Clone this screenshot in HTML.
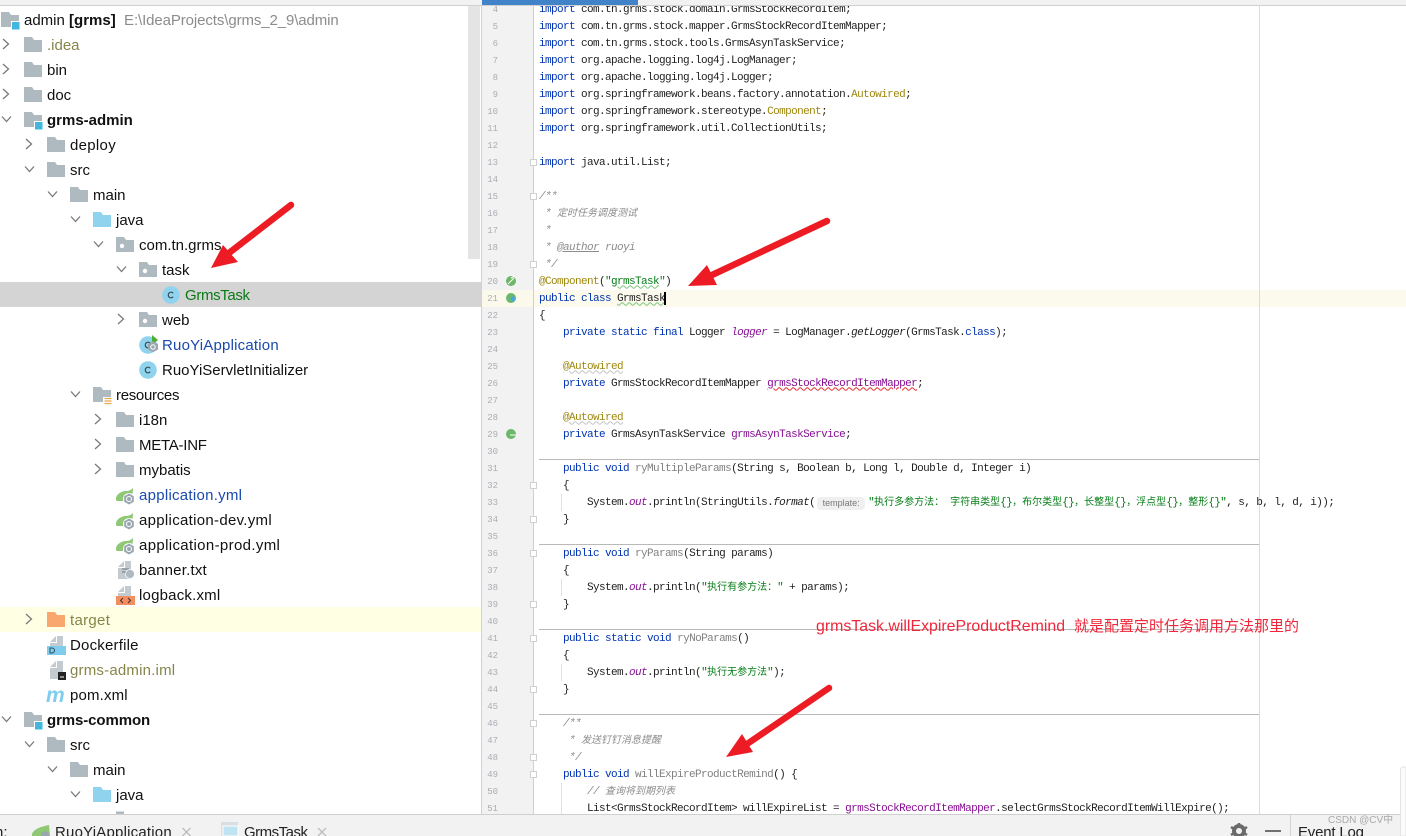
<!DOCTYPE html>
<html><head><meta charset="utf-8"><title>grms</title>
<style>
html,body{margin:0;padding:0;width:1406px;height:836px;overflow:hidden;background:#fff}
#t{position:absolute;left:0;top:8px;width:468px;height:806px;overflow:hidden;font:15px/25px "Liberation Sans","Noto Sans CJK SC",sans-serif;color:#111}
#t div{position:absolute;white-space:nowrap;height:25px}
.o{color:#85854a}.bl{color:#1a49ad}.g{color:#8c8c8c;letter-spacing:-.1px}.b{font-weight:700}
#gut{position:absolute;left:482px;top:6px;width:51px;height:808px;background:#f2f2f2;overflow:hidden}
#nums{position:absolute;left:0;top:-4.5px;width:16px;margin:0;text-align:right;font:9px/17px "Liberation Mono",monospace;color:#a8adb4}
#ed{position:absolute;left:534px;top:6px;width:872px;height:808px;overflow:hidden}
#code{position:absolute;left:5px;top:-4.5px;margin:0;font:11px/17px "Liberation Mono","Noto Sans CJK SC",monospace;letter-spacing:-.6px;color:#1f1f1f}
.z{font-size:10px;letter-spacing:0;line-height:10px}
.k{color:#0033b3}.a{color:#9e880d}.c{color:#8c8c8c;font-style:italic}.s{color:#067d17}.f{color:#871094}.fi{color:#871094;font-style:italic}.u{color:#808080}.i{font-style:italic}
.wg{text-decoration:underline wavy #7cc47c 1px}.wa{text-decoration:underline wavy #c4c4c4 1px}.wr{text-decoration:underline wavy #e53030 1px}
.in{display:inline-block;width:48px;height:13px;margin:2px 3px 0 2px;background:#f0f0f0;border-radius:4px;font:9px/13px "Liberation Sans",sans-serif;letter-spacing:0;color:#777;text-align:center;vertical-align:top}
.sep{position:absolute;left:539px;width:720px;height:1px;background:#b9b9b9}
.bt{position:absolute;font:15px/20px "Liberation Sans",sans-serif;color:#222;white-space:nowrap}
</style></head><body>
<div style="position:absolute;left:0;top:0;width:1406px;height:5px;background:#f2f2f2"></div>
<div style="position:absolute;left:0;top:5px;width:1406px;height:1px;background:#d1d1d1"></div>
<div style="position:absolute;left:482px;top:0;width:156px;height:5px;background:#4083c9"></div>
<div style="position:absolute;left:0;top:282px;width:481px;height:25px;background:#d4d4d4"></div>
<div style="position:absolute;left:0;top:607px;width:481px;height:25px;background:#ffffe4"></div>
<div style="position:absolute;left:468px;top:6px;width:12px;height:253px;background:#e4e4e4"></div>
<div style="position:absolute;left:481px;top:6px;width:1px;height:808px;background:#d1d1d1"></div>
<div id="gut">
<div style="position:absolute;left:0;top:284px;width:51px;height:17px;background:#fbf9ec"></div>
<pre id="nums">4
5
6
7
8
9
10
11
12
13
14
15
16
17
18
19
20
21
22
23
24
25
26
27
28
29
30
31
32
33
34
35
36
37
38
39
40
41
42
43
44
45
46
47
48
49
50
51</pre>
</div>
<div style="position:absolute;left:533px;top:6px;width:1px;height:808px;background:#cfcfcf"></div>
<div style="position:absolute;left:534px;top:290px;width:872px;height:17px;background:#fcfaed"></div>
<div style="position:absolute;left:1259px;top:6px;width:1px;height:808px;background:#dcdcdc"></div>
<div class="sep" style="top:459px"></div>
<div class="sep" style="top:544px"></div>
<div class="sep" style="top:629px"></div>
<div class="sep" style="top:714px"></div>
<div style="position:absolute;left:561px;top:494px;width:1px;height:17px;background:#e0e0e0"></div>
<div style="position:absolute;left:561px;top:579px;width:1px;height:17px;background:#e0e0e0"></div>
<div style="position:absolute;left:561px;top:664px;width:1px;height:17px;background:#e0e0e0"></div>
<div style="position:absolute;left:561px;top:783px;width:1px;height:31px;background:#e0e0e0"></div>
<div id="ed"><pre id="code"><span class="k">import</span> com.tn.grms.stock.domain.GrmsStockRecordItem;
<span class="k">import</span> com.tn.grms.stock.mapper.GrmsStockRecordItemMapper;
<span class="k">import</span> com.tn.grms.stock.tools.GrmsAsynTaskService;
<span class="k">import</span> org.apache.logging.log4j.LogManager;
<span class="k">import</span> org.apache.logging.log4j.Logger;
<span class="k">import</span> org.springframework.beans.factory.annotation.<span class="a">Autowired</span>;
<span class="k">import</span> org.springframework.stereotype.<span class="a">Component</span>;
<span class="k">import</span> org.springframework.util.CollectionUtils;

<span class="k">import</span> java.util.List;

<span class="c">/**</span>
<span class="c"> * <span class="z">定时任务调度测试</span></span>
<span class="c"> *</span>
<span class="c"> * <u>@author</u> ruoyi</span>
<span class="c"> */</span>
<span class="a">@Component</span>(<span class="s">"<span class="wg">grmsTask</span>"</span>)
<span class="k">public class</span> <span class="wg">GrmsTask</span>
{
    <span class="k">private static final</span> Logger <span class="fi">logger</span> = LogManager.<span class="i">getLogger</span>(GrmsTask.<span class="k">class</span>);

    <span class="a wa">@Autowired</span>
    <span class="k">private</span> GrmsStockRecordItemMapper <span class="f wr">grmsStockRecordItemMapper</span>;

    <span class="a wa">@Autowired</span>
    <span class="k">private</span> GrmsAsynTaskService <span class="f">grmsAsynTaskService</span>;

    <span class="k">public void</span> <span class="u">ryMultipleParams</span>(String s, Boolean b, Long l, Double d, Integer i)
    {
        System.<span class="fi">out</span>.println(StringUtils.<span class="i">format</span>(<span class="in">template:</span><span class="s">"<span class="z">执行多参方法：</span> <span class="z">字符串类型</span>{}<span class="z">，布尔类型</span>{}<span class="z">，长整型</span>{}<span class="z">，浮点型</span>{}<span class="z">，整形</span>{}"</span>, s, b, l, d, i));
    }

    <span class="k">public void</span> <span class="u">ryParams</span>(String params)
    {
        System.<span class="fi">out</span>.println(<span class="s">"<span class="z">执行有参方法：</span>"</span> + params);
    }

    <span class="k">public static void</span> <span class="u">ryNoParams</span>()
    {
        System.<span class="fi">out</span>.println(<span class="s">"<span class="z">执行无参方法</span>"</span>);
    }

    <span class="c">/**</span>
<span class="c">     * <span class="z">发送钉钉消息提醒</span></span>
<span class="c">     */</span>
    <span class="k">public void</span> <span class="u">willExpireProductRemind</span>() {
        <span class="c">// <span class="z">查询将到期列表</span></span>
        List&lt;GrmsStockRecordItem&gt; willExpireList = <span class="f">grmsStockRecordItemMapper</span>.selectGrmsStockRecordItemWillExpire();</pre></div>
<div style="position:absolute;left:664px;top:292px;width:2px;height:13px;background:#000"></div>
<div id="t">
<div style="left:24px;top:0">admin <span class="b">[grms]</span> &nbsp;<span class="g">E:\IdeaProjects\grms_2_9\admin</span></div>
<div class="o" style="left:47px;top:25px">.idea</div>
<div style="left:47px;top:50px">bin</div>
<div style="left:47px;top:75px">doc</div>
<div class="b" style="left:47px;top:100px">grms-admin</div>
<div style="left:70px;top:125px;letter-spacing:.3px">deploy</div>
<div style="left:70px;top:150px">src</div>
<div style="left:93px;top:175px">main</div>
<div style="left:116px;top:200px">java</div>
<div style="left:139px;top:225px">com.tn.grms</div>
<div style="left:162px;top:250px">task</div>
<div style="left:185px;top:275px;color:#0a7a14;letter-spacing:-.35px">GrmsTask</div>
<div style="left:162px;top:300px">web</div>
<div class="bl" style="left:162px;top:325px;letter-spacing:.2px">RuoYiApplication</div>
<div style="left:162px;top:350px">RuoYiServletInitializer</div>
<div style="left:116px;top:375px;letter-spacing:-.3px">resources</div>
<div style="left:139px;top:400px">i18n</div>
<div style="left:139px;top:425px;letter-spacing:-.25px">META-INF</div>
<div style="left:139px;top:450px">mybatis</div>
<div class="bl" style="left:139px;top:475px;letter-spacing:.27px">application.yml</div>
<div style="left:139px;top:500px;letter-spacing:.3px">application-dev.yml</div>
<div style="left:139px;top:525px;letter-spacing:.35px">application-prod.yml</div>
<div style="left:139px;top:550px;letter-spacing:.2px">banner.txt</div>
<div style="left:139px;top:575px;letter-spacing:.2px">logback.xml</div>
<div class="o" style="left:70px;top:600px;letter-spacing:.3px">target</div>
<div style="left:70px;top:625px;letter-spacing:.2px">Dockerfile</div>
<div class="o" style="left:70px;top:650px;letter-spacing:.2px">grms-admin.iml</div>
<div style="left:70px;top:675px;letter-spacing:.15px">pom.xml</div>
<div class="b" style="left:47px;top:700px;letter-spacing:-.1px">grms-common</div>
<div style="left:70px;top:725px">src</div>
<div style="left:93px;top:750px">main</div>
<div style="left:116px;top:775px">java</div>
</div>
<div style="position:absolute;left:0;top:814px;width:1406px;height:22px;background:#f2f2f2;overflow:hidden">
<div style="position:absolute;left:0;top:0;width:1406px;height:1px;background:#cfcfcf"></div>
<div class="bt" style="left:-5px;top:9px">n:</div>
<div class="bt" style="left:55px;top:9px;letter-spacing:.2px">RuoYiApplication</div>
<div class="bt" style="left:244px;top:9px;letter-spacing:-.5px">GrmsTask</div>
<div class="bt" style="left:1298px;top:9px;letter-spacing:-.2px">Event Log</div>
<div style="position:absolute;left:1290px;top:1px;width:1px;height:21px;background:#d4d4d4"></div>
<div style="position:absolute;left:1328px;top:0;font:10px/14px 'Liberation Sans','Noto Sans CJK SC',sans-serif;color:#a8a8a8;white-space:nowrap">CSDN @CV中</div>
</div>
<svg width="1406" height="836" viewBox="0 0 1406 836" style="position:absolute;left:0;top:0;pointer-events:none">
<defs>
<g id="f"><path d="M0 0h8l2 3h8v12H0z" fill="#aeb9c0"/></g>
<g id="j"><path d="M0 0h8l2 3h8v12H0z" fill="#8fd3ee"/></g>
<g id="p"><path d="M0 0h8l2 3h8v12H0z" fill="#aeb9c0"/><circle cx="6" cy="9" r="2.2" fill="#fff"/></g>
<g id="m"><path d="M0 0h8l2 3h8v12H0z" fill="#aeb9c0"/><rect x="10.500" y="9.500" width="8.500" height="8.500" fill="#40b6e0" stroke="#fff"/></g>
<g id="R"><path d="M0 -5L5.5 0L0 5" fill="none" stroke="#7a7a7a" stroke-width="1.3"/></g>
<g id="D"><path d="M-1 -2.5L3.500 2.500L8 -2.5" fill="none" stroke="#7a7a7a" stroke-width="1.3"/></g>
<g id="C"><circle cx="9" cy="8" r="8.8" fill="#8fd3ee"/><path d="M11.200 6.200a2.800 2.800 0 1 0 0 3.600" fill="none" stroke="#3a4a52" stroke-width="1.200"/></g>
<g id="Y"><path d="M0 11C0 6 6 3 10 3C13 3 15 2 17 0C17 7 15 13 9 13H2C0 13 0 12 0 11z" fill="#8fc874"/><circle cx="13" cy="11" r="6" fill="#fff"/><path d="M13 5.500l4.800 2.800v5.400L13 16.500l-4.800-2.800V8.300z" fill="#9aa7b0"/><circle cx="13" cy="11" r="2.500" fill="none" stroke="#fff"/></g>
<g id="F"><path d="M0 6L6 0V6zM7 0h6v10H0V7h7z" fill="#c3cbd1"/></g>
<g id="G"><path d="M0 6L6 0V6zM7 0h6v18H0V7h7z" fill="#c3cbd1"/></g>
</defs>
<!-- tree icons -->
<use href="#m" x="1" y="12"/>
<use href="#f" x="24" y="37"/><use href="#f" x="24" y="62"/><use href="#f" x="24" y="87"/>
<use href="#m" x="24" y="112"/>
<use href="#f" x="47" y="137"/><use href="#f" x="47" y="162"/><use href="#f" x="70" y="187"/>
<use href="#j" x="93" y="212"/><use href="#p" x="116" y="237"/><use href="#p" x="139" y="262"/>
<use href="#C" x="162" y="287"/><use href="#p" x="139" y="312"/>
<use href="#C" x="139" y="337"/><path d="M152 335l6 5-6 5z" fill="#4caf32"/><path d="M148 344l5-2.800 5 2.800v5.500l-5 2.800-5-2.800z" fill="#9aa7b0"/><circle cx="153" cy="347" r="2.200" fill="none" stroke="#fff"/>
<use href="#C" x="139" y="362"/>
<use href="#f" x="93" y="387"/><rect x="103" y="397" width="9" height="9" fill="#fff"/><path d="M104.500 398.500h7M104.500 401h7M104.500 403.500h7" stroke="#e8a84c" stroke-width="1.300"/>
<use href="#f" x="116" y="412"/><use href="#f" x="116" y="437"/><use href="#f" x="116" y="462"/>
<use href="#Y" x="116" y="488"/><use href="#Y" x="116" y="513"/><use href="#Y" x="116" y="538"/>
<use href="#G" x="118" y="561"/><path d="M122 569h7M122 572h5" stroke="#6b7680"/><circle cx="130" cy="574" r="4.500" fill="#aeb9c0" stroke="#fff" stroke-width=".7"/>
<use href="#F" x="118" y="586"/><rect x="116" y="596" width="19" height="9" fill="#f58e5f"/><path d="M123 598l-2.500 2.500 2.500 2.500M128 598l2.500 2.500-2.500 2.500" fill="none" stroke="#333"/>
<path d="M47 612h8l2 3h8v12H47z" fill="#f9a66f"/>
<use href="#F" x="50" y="636"/><rect x="47" y="646" width="19" height="9" fill="#7fcdec"/><path d="M50 648v5h2a2.500 2.500 0 0 0 0-5z" fill="none" stroke="#2f4a5c"/>
<use href="#G" x="50" y="661"/><rect x="58" y="672" width="8" height="8" fill="#222"/><path d="M60 677h4" stroke="#fff"/>
<text x="46" y="702" font-family="'Liberation Sans',sans-serif" font-size="21" font-weight="700" font-style="italic" fill="#7fcdec">m</text>
<use href="#m" x="24" y="712"/>
<use href="#f" x="47" y="737"/><use href="#f" x="70" y="762"/><use href="#j" x="93" y="787"/>
<rect x="116" y="811.500" width="8" height="2.500" fill="#aeb9c0"/>
<!-- chevrons -->
<use href="#R" x="3" y="44"/><use href="#R" x="3" y="69"/><use href="#R" x="3" y="94"/>
<use href="#D" x="3" y="119"/><use href="#R" x="26" y="144"/><use href="#D" x="26" y="169"/>
<use href="#D" x="49" y="194"/><use href="#D" x="72" y="219"/><use href="#D" x="95" y="244"/><use href="#D" x="118" y="269"/>
<use href="#R" x="118" y="319"/><use href="#D" x="72" y="394"/>
<use href="#R" x="95" y="419"/><use href="#R" x="95" y="444"/><use href="#R" x="95" y="469"/>
<use href="#R" x="26" y="619"/>
<use href="#D" x="3" y="719"/><use href="#D" x="26" y="744"/><use href="#D" x="49" y="769"/><use href="#D" x="72" y="794"/>
<!-- gutter icons -->
<circle cx="511" cy="281" r="5" fill="#6cb86a"/><path d="M508 284l6-6M511 278l4-2" stroke="#fff"/>
<circle cx="511" cy="298" r="5" fill="#6cb86a"/><circle cx="513" cy="299" r="2.500" fill="#4aa8dc"/>
<circle cx="511" cy="434" r="5" fill="#6cb86a"/><path d="M510 435h6" stroke="#fff"/>
<!-- fold marks -->
<g fill="#fff" stroke="#d0d0d0">
<rect x="530.500" y="159.500" width="6" height="6"/><rect x="530.500" y="193.500" width="6" height="6"/><rect x="530.500" y="261.500" width="6" height="6"/>
<rect x="530.500" y="482.500" width="6" height="6"/><rect x="530.500" y="516.500" width="6" height="6"/>
<rect x="530.500" y="550.500" width="6" height="6"/><rect x="530.500" y="601.500" width="6" height="6"/>
<rect x="530.500" y="635.500" width="6" height="6"/><rect x="530.500" y="686.500" width="6" height="6"/>
<rect x="530.500" y="720.500" width="6" height="6"/><rect x="530.500" y="754.500" width="6" height="6"/><rect x="530.500" y="771.500" width="6" height="6"/>
</g>
<!-- bottom icons -->
<path d="M32 836c-1-5 6-9 17-11l1 11z" fill="#8fc874"/><path d="M41 836v-3l4-2 4 2v3z" fill="#9aa7b0"/>
<rect x="221" y="822" width="17" height="14" fill="#d9dee2"/><rect x="223" y="826" width="15" height="10" fill="#bfe3f0" stroke="#fff"/>
<path d="M182.500 828l8 8M190.500 828l-8 8M318 828l8 8M326 828l-8 8" stroke="#b5b5b5" stroke-width="1.200"/>
<circle cx="1239" cy="831" r="5" fill="none" stroke="#6b6b6b" stroke-width="4"/>
<path d="M1239 823v3M1239 836v3M1231 827l3 2M1244 833l3 2M1231 835l3-2M1244 829l3-2" stroke="#6b6b6b" stroke-width="2.500"/>
<rect x="1265" y="830" width="16" height="2" fill="#707070"/>
<path d="M1406 767h-3a3 3 0 0 0-2.500 3v66H1406z" fill="#fbfbfb" stroke="#e4e4e4"/>
<!-- red arrows -->
<g fill="#ed1c24">
<path d="M291 205L229 253" stroke="#ed1c24" stroke-width="6.500" stroke-linecap="round"/><path d="M211 268L223 245L238 262z"/>
<path d="M827 221L712 275" stroke="#ed1c24" stroke-width="6.500" stroke-linecap="round"/><path d="M688 286L707 265L717 285z"/>
<path d="M829 688L747 744" stroke="#ed1c24" stroke-width="6.500" stroke-linecap="round"/><path d="M726 757L742 734L753 752z"/>
</g>
<text x="816" y="631" font-family="'Liberation Sans','Noto Sans CJK SC',sans-serif" font-size="15.9" fill="#f0263a">grmsTask.willExpireProductRemind</text>
<text x="1074" y="631" font-family="'Liberation Sans','Noto Sans CJK SC',sans-serif" font-size="15" fill="#f0263a">就是配置定时任务调用方法那里的</text>
</svg>
</body></html>
